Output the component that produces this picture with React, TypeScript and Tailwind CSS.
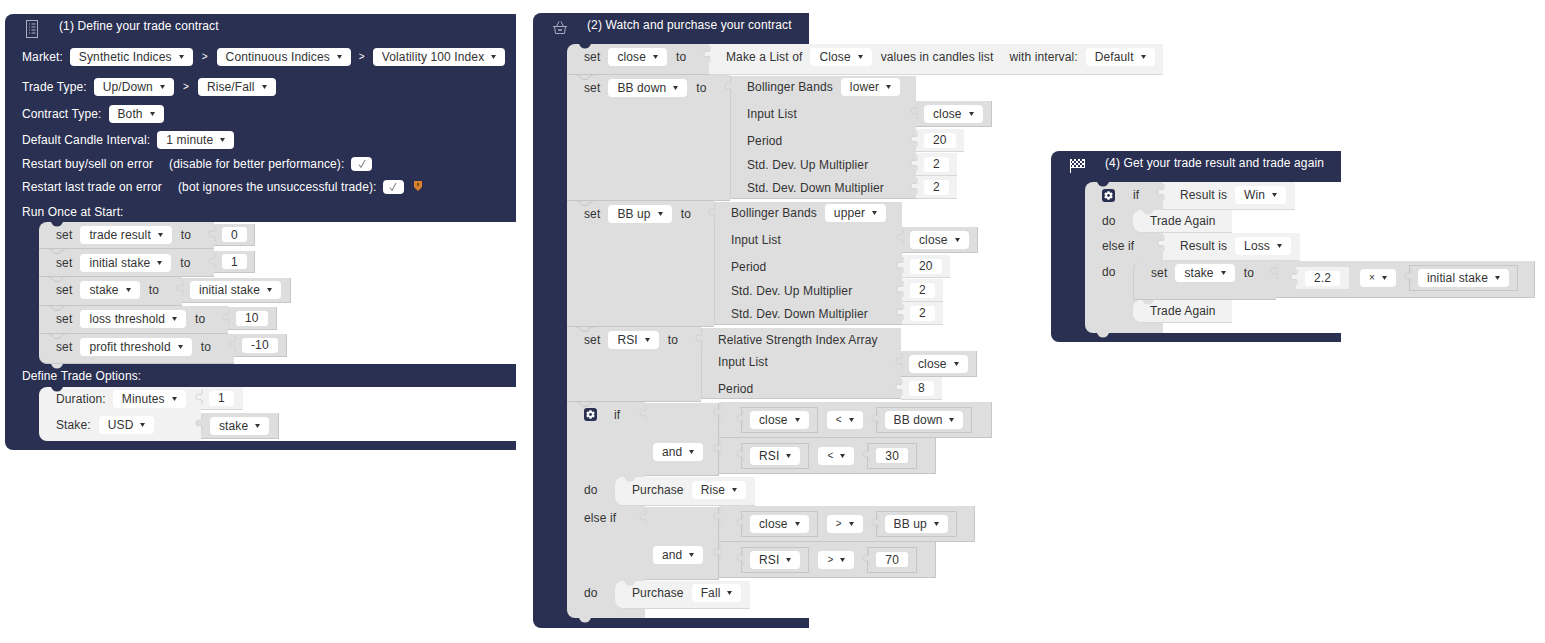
import type { ReactNode } from "react";
import clsx from "clsx";
import { FaCog } from "react-icons/fa";

const GRAY = "#dedede";
const NAVY = "#2a3052";

function Arrow() {
  return (
    <svg width="5" height="4" viewBox="0 0 5 4" className="ml-[7px] shrink-0">
      <path d="M0 0h5L2.5 4z" fill="#333" />
    </svg>
  );
}

function Pill({ children, className }: { children: ReactNode; className?: string }) {
  return (
    <span className={clsx("inline-flex h-[18px] shrink-0 items-center rounded-[4px] bg-white px-[9px] whitespace-nowrap text-[#333]", className)}>
      {children}
      <Arrow />
    </span>
  );
}

function Num({ children }: { children: ReactNode }) {
  return (
    <span className="inline-flex h-[15px] shrink-0 items-center rounded-[3px] bg-white px-[9px] text-[#333]">
      {children}
    </span>
  );
}

// the small bump a statement block has on its top edge
function Notch({ color, line, className }: { color?: string; line?: boolean; className?: string }) {
  return (
    <svg width="18" height="6" viewBox="0 0 18 6" className={clsx("pointer-events-none absolute", className)}>
      <path
        d="M0 0h3c1.500 3 3 4.500 6 4.500S13.500 3 15 0h3"
        fill={line ? "none" : color}
        stroke={line ? "#c6c6c6" : "none"}
      />
    </svg>
  );
}

// puzzle tab on the left edge of a value block
function Tab({ light }: { light?: boolean }) {
  return (
    <svg width="8" height="16" viewBox="0 0 8 16" className="pointer-events-none absolute top-[2px] left-[-6px]">
      <path d="M7 0v4C7 8 1 2 1 8s6 0 6 4v4" fill={light ? "#f2f2f2" : GRAY} stroke="#d2d2d2" strokeWidth="1" />
    </svg>
  );
}

function Value({ light, className, children }: { light?: boolean; className?: string; children: ReactNode }) {
  return (
    <div
      className={clsx(
        "relative flex shrink-0 items-center self-start whitespace-nowrap text-[#333]",
        light ? "bg-[#f2f2f2] shadow-[0_1px_0_#d8d8d8]" : "border-r border-b border-[#c6c6c6] bg-[#dedede]",
        className,
      )}
    >
      <Tab light={light} />
      {children}
    </div>
  );
}

// value block nested in a comparison, it has a thin outline all round
function Operand({ children }: { children: ReactNode }) {
  return (
    <div className="relative flex h-[26px] shrink-0 items-center border border-[#c6c6c6] pr-[8px] pl-[8px]">
      <Tab />
      {children}
    </div>
  );
}

function GearBadge() {
  return (
    <span className="flex h-[13px] w-[13px] shrink-0 items-center justify-center rounded-[3px] bg-[#2a3052]">
      <FaCog className="h-[9px] w-[9px] text-white" />
    </span>
  );
}

function DocIcon() {
  return (
    <svg width="12" height="18" viewBox="0 0 12 18" fill="none" stroke="#a9adc2">
      <rect x="0.500" y="0.500" width="11" height="17" />
      <path d="M3 4h1M5.500 4h4M3 7h1M5.500 7h4M3 10h1M5.500 10h4M3 13h1M5.500 13h4" strokeWidth="1" />
    </svg>
  );
}

function BasketIcon() {
  return (
    <svg width="14" height="13" viewBox="0 0 14 13" fill="none" stroke="#a9adc2">
      <path d="M0 5.500h14M1.500 5.500l1 7h9l1-7M3.500 5.500L6 0.500M10.500 5.500L8 0.500" />
      <path d="M5 9h4" strokeWidth="1.500" />
    </svg>
  );
}

function FlagIcon() {
  return (
    <svg width="15" height="15" viewBox="0 0 15 15">
      <rect x="0" y="1" width="15" height="9" fill="#fff" />
      <path d="M2 1h2v2H2zM6 1h2v2H6zM10 1h2v2h-2zM0 3h2v2H0zM4 3h2v2H4zM8 3h2v2H8zM12 3h2v2h-2zM2 5h2v2H2zM6 5h2v2H6zM10 5h2v2h-2zM0 7h2v2H0zM4 7h2v2H4zM8 7h2v2H8zM12 7h2v2h-2z" fill="#2a3052" />
      <path d="M0.500 1v14" stroke="#fff" />
    </svg>
  );
}

function Check() {
  return (
    <span className="flex h-[14px] w-[21px] items-center justify-center rounded-[4px] bg-white">
      <svg width="10" height="10" viewBox="0 0 10 10" fill="none">
        <path d="M2 5.500l2 3L8 1" stroke="#666" strokeWidth="0.900" />
      </svg>
    </span>
  );
}

function Shield() {
  return (
    <svg width="10" height="10" viewBox="0 0 10 10" className="ml-[9px] mb-[3px]">
      <path d="M1 0h8v6L5 10 1 6z" fill="#d9822b" />
      <path d="M5 2v3" stroke="#5a3a1a" strokeWidth="1.500" />
    </svg>
  );
}

function Rail({ children, className }: { children: ReactNode; className?: string }) {
  return (
    <div className={clsx("flex", className)}>
      <div className="w-[44px] shrink-0 bg-[#2a3052]" />
      <div className="relative -ml-[10px] min-w-0">{children}</div>
    </div>
  );
}

function SetCell({ name, className, children }: { name: string; className?: string; children?: ReactNode }) {
  return (
    <div className={clsx("relative flex shrink-0 border-b border-[#c6c6c6] bg-[#dedede] pl-[17px] text-[#333]", className)}>
      {children}
      <div className="flex h-[18px] items-center">
        <span>set</span>
        <Pill className="ml-[8px]">{name}</Pill>
        <span className="ml-[9px]">to</span>
      </div>
    </div>
  );
}

function DefineBlock() {
  return (
    <div className="absolute top-[14px] left-[5px] w-[511px]">
      <div className="rounded-tl-[8px] bg-[#2a3052] pl-[17px] text-white">
        <div className="flex h-[24px] items-center">
          <span className="ml-[4px] flex w-[33px] pt-[5px]">
            <DocIcon />
          </span>
          <span>(1) Define your trade contract</span>
        </div>
        <div className="flex h-[38px] items-center">
          Market:
          <Pill className="ml-[7px]">Synthetic Indices</Pill>
          <span className="mx-[9px] text-[10px]">&gt;</span>
          <Pill>Continuous Indices</Pill>
          <span className="mx-[8px] text-[10px]">&gt;</span>
          <Pill>Volatility 100 Index</Pill>
        </div>
        <div className="flex h-[22px] items-center">
          Trade Type:
          <Pill className="ml-[7px]">Up/Down</Pill>
          <span className="mx-[9px] text-[10px]">&gt;</span>
          <Pill>Rise/Fall</Pill>
        </div>
        <div className="flex h-[32px] items-center">
          Contract Type:
          <Pill className="ml-[7px]">Both</Pill>
        </div>
        <div className="flex h-[20px] items-center">
          Default Candle Interval:
          <Pill className="ml-[7px]">1 minute</Pill>
        </div>
        <div className="flex h-[28px] items-center">
          <span>Restart buy/sell on error</span>
          <span className="ml-[16px]">(disable for better performance):</span>
          <span className="ml-[7px]">
            <Check />
          </span>
        </div>
        <div className="flex h-[18px] items-center">
          <span>Restart last trade on error</span>
          <span className="ml-[16px]">(bot ignores the unsuccessful trade):</span>
          <span className="ml-[6px]">
            <Check />
          </span>
          <Shield />
        </div>
        <div className="flex h-[26px] items-center pt-[6px]">Run Once at Start:</div>
      </div>

      <Rail>
        <div className="flex h-[27px]">
          <SetCell name="trade result" className="h-[27px] w-[175px] items-center rounded-tl-[8px]">
            <Notch color={NAVY} className="top-0 left-[9px]" />
          </SetCell>
          <Value className="mt-[2px] h-[22px] pl-[8px]">
            <Num>0</Num>
            <span className="w-[7px]" />
          </Value>
        </div>
        <div className="flex h-[28px]">
          <SetCell name="initial stake" className="h-[28px] w-[175px] items-center">
            <Notch line className="top-0 left-[9px]" />
          </SetCell>
          <Value className="mt-[2px] h-[22px] pl-[8px]">
            <Num>1</Num>
            <span className="w-[7px]" />
          </Value>
        </div>
        <div className="flex h-[29px]">
          <SetCell name="stake" className="h-[29px] w-[143px] items-center pb-[2px]">
            <Notch line className="top-0 left-[9px]" />
          </SetCell>
          <Value className="mt-[1px] h-[25px] pr-[1px] pl-[8px]">
            <Pill>initial stake</Pill>
            <span className="w-[8px]" />
          </Value>
        </div>
        <div className="flex h-[28px]">
          <SetCell name="loss threshold" className="h-[28px] w-[189px] items-center pb-[2px]">
            <Notch line className="top-0 left-[9px]" />
          </SetCell>
          <Value className="mt-[1px] h-[23px] pl-[8px]">
            <Num>10</Num>
            <span className="w-[8px]" />
          </Value>
        </div>
        <div className="flex h-[30px]">
          <SetCell name="profit threshold" className="h-[30px] w-[195px] items-center rounded-bl-[8px] pb-[3px]">
            <Notch line className="top-0 left-[9px]" />
          </SetCell>
          <Value className="h-[23px] pl-[8px]">
            <Num>-10</Num>
            <span className="w-[8px]" />
          </Value>
        </div>
      </Rail>

      <div className="relative flex h-[23px] items-center bg-[#2a3052] pl-[17px] text-white">
        <Notch color={GRAY} className="top-0 left-[43px]" />
        Define Trade Options:
      </div>

      <Rail>
        <div className="flex h-[54px] text-[#333]">
          <div className="relative flex w-[162px] shrink-0 flex-col rounded-l-[8px] bg-[#f2f2f2] pl-[17px]">
            <Notch color={NAVY} className="top-0 left-[9px]" />
            <div className="flex h-[24px] items-center">
              Duration:
              <Pill className="ml-[7px]">Minutes</Pill>
            </div>
            <div className="flex h-[28px] items-center">
              Stake:
              <Pill className="ml-[8px]">USD</Pill>
            </div>
          </div>
          <div className="flex flex-col">
            <Value light className="h-[22px] pl-[8px]">
              <Num>1</Num>
              <span className="w-[9px]" />
            </Value>
            <Value className="mt-[4px] h-[26px] pl-[9px]">
              <Pill>stake</Pill>
              <span className="w-[9px]" />
            </Value>
          </div>
        </div>
      </Rail>
      <div className="h-[9px] rounded-bl-[8px] bg-[#2a3052]" />
    </div>
  );
}

function ListRow({ label, cell, value, className }: { label: ReactNode; cell: string; value?: ReactNode; className?: string }) {
  return (
    <div className={clsx("flex", className)}>
      <div className={clsx("flex shrink-0 items-center border-l border-[#cfcfcf] bg-[#dedede] pl-[16px] whitespace-nowrap", cell)}>{label}</div>
      {value}
    </div>
  );
}

function ListInput() {
  return (
    <Value className="h-[26px] pl-[8px]">
      <Pill>close</Pill>
      <span className="w-[8px]" />
    </Value>
  );
}

function PeriodValue({ n, className }: { n: string; className?: string }) {
  return (
    <Value light className={clsx("h-[22px] pl-[8px]", className)}>
      <Num>{n}</Num>
      <span className="w-[8px]" />
    </Value>
  );
}

function Bands({ band, cell }: { band: string; cell: string }) {
  return (
    <div className="relative mt-[1px] flex flex-col border-b border-transparent">
      <div className="relative h-0">
        <Tab />
      </div>
      <ListRow
        className="h-[25px]"
        cell={clsx(cell, "pb-[3px]")}
        label={
          <>
            Bollinger Bands
            <Pill className="ml-[8px]">{band}</Pill>
          </>
        }
      />
      <ListRow className="h-[28px]" cell={clsx(cell, "pb-[2px]")} label="Input List" value={<ListInput />} />
      <ListRow className="h-[23px]" cell={cell} label="Period" value={<PeriodValue n="20" />} />
      <ListRow className="h-[24px]" cell={clsx(cell, "pt-[2px]")} label="Std. Dev. Up Multiplier" value={<PeriodValue n="2" className="mt-[1px]" />} />
      <ListRow className="h-[23px]" cell={clsx(cell, "border-b border-b-[#c6c6c6] pt-[2px]")} label="Std. Dev. Down Multiplier" value={<PeriodValue n="2" />} />
    </div>
  );
}

function IfLabel({ children }: { children: ReactNode }) {
  return <div className="flex h-[24px] items-center">{children}</div>;
}

function Op({ children }: { children: ReactNode }) {
  return <span className="text-[10px]">{children}</span>;
}

function Compare({ left, op, right, end }: { left: string; op: string; right: ReactNode; end?: string }) {
  return (
    <Value className={clsx("h-[36px] pl-[22px] text-[#333]", end)}>
      <Operand>
        <Pill>{left}</Pill>
      </Operand>
      <Pill className="ml-[9px]">
        <Op>{op}</Op>
      </Pill>
      <div className="ml-[13px]">{right}</div>
    </Value>
  );
}

function Purchase({ kind, className }: { kind: string; className?: string }) {
  return (
    <div className={clsx("relative flex shrink-0 items-center rounded-l-[8px] bg-[#f2f2f2] pr-[9px] pl-[17px] shadow-[0_1px_0_#d8d8d8]", className)}>
      <Notch color={GRAY} className="top-0 left-[6px]" />
      Purchase
      <Pill className="ml-[8px]">{kind}</Pill>
    </div>
  );
}

function WatchBlock() {
  return (
    <div className="absolute top-[13px] left-[533px] w-[276px]">
      <div className="flex h-[31px] items-start rounded-tl-[8px] bg-[#2a3052] pt-[6px] text-white">
        <span className="ml-[20px] flex w-[34px] pt-[2px]">
          <BasketIcon />
        </span>
        <span>(2) Watch and purchase your contract</span>
      </div>

      <Rail>
        <div className="relative text-[#333]">
          <div className="flex h-[31px]">
            <SetCell name="close" className="w-[142px] items-center rounded-tl-[8px] pb-[4px]">
              <Notch color={NAVY} className="top-0 left-[9px]" />
            </SetCell>
            <Value light className="h-[30px] w-[454px] pb-[4px] pl-[17px]">
              Make a List of
              <Pill className="ml-[8px]">Close</Pill>
              <span className="ml-[9px]">values in candles list</span>
              <span className="ml-[16px]">with interval:</span>
              <Pill className="ml-[8px]">Default</Pill>
            </Value>
          </div>

          <div className="flex h-[126px]">
            <SetCell name="BB down" className="w-[163px] items-start pt-[4px]">
              <Notch line className="top-0 left-[9px]" />
            </SetCell>
            <Bands band="lower" cell="w-[186px]" />
          </div>

          <div className="flex h-[126px]">
            <SetCell name="BB up" className="w-[147px] items-start pt-[4px]">
              <Notch line className="top-0 left-[9px]" />
            </SetCell>
            <Bands band="upper" cell="w-[188px]" />
          </div>

          <div className="flex h-[75px]">
            <SetCell name="RSI" className="w-[134px] items-start pt-[4px]">
              <Notch line className="top-0 left-[9px]" />
            </SetCell>
            <div className="relative mt-[1px] flex flex-col">
              <div className="relative h-0">
                <Tab />
              </div>
              <ListRow className="h-[23px]" cell="w-[200px]" label="Relative Strength Index Array" />
              <ListRow className="h-[25px]" cell="w-[200px] pb-[3px]" label="Input List" value={<ListInput />} />
              <ListRow className="h-[23px]" cell="w-[200px] border-b border-b-[#c6c6c6] pt-[3px]" label="Period" value={<PeriodValue n="8" className="mt-[1px]" />} />
            </div>
          </div>

          <div className="flex h-[74px]">
            <div className="relative h-full w-[78px] shrink-0 bg-[#dedede] pl-[17px]">
              <Notch line className="top-0 left-[9px]" />
              <div className="flex h-[24px] items-center pt-[1px]">
                <GearBadge />
                <span className="ml-[17px]">if</span>
              </div>
            </div>
            <Value className="mt-[1px] h-[73px] w-[74px] items-end pb-[14px] pl-[8px]">
              <Pill>and</Pill>
            </Value>
            <div className="flex flex-col">
              <Compare
                left="close"
                op="<"
                end="pr-[19px]"
                right={
                  <Operand>
                    <Pill>BB down</Pill>
                  </Operand>
                }
              />
              <Compare
                left="RSI"
                op="<"
                end="pr-[18px]"
                right={
                  <Operand>
                    <Num>30</Num>
                  </Operand>
                }
              />
            </div>
          </div>

          <div className="flex h-[30px] w-[78px] bg-[#dedede] pl-[17px]">
            <span className="w-[31px] shrink-0 pt-[8px]">do</span>
            <Purchase kind="Rise" className="mt-[1px] h-[28px] pb-[2px]" />
          </div>

          <div className="flex h-[75px]">
            <div className="h-full w-[78px] shrink-0 bg-[#dedede] pl-[17px]">
              <IfLabel>else if</IfLabel>
            </div>
            <Value className="mt-[1px] h-[73px] w-[74px] items-end pb-[15px] pl-[8px]">
              <Pill>and</Pill>
            </Value>
            <div className="flex flex-col">
              <Compare
                left="close"
                op=">"
                end="pr-[17px]"
                right={
                  <Operand>
                    <Pill>BB up</Pill>
                  </Operand>
                }
              />
              <Compare
                left="RSI"
                op=">"
                end="pr-[18px]"
                right={
                  <Operand>
                    <Num>70</Num>
                  </Operand>
                }
              />
            </div>
          </div>

          <div className="flex h-[27px] w-[78px] bg-[#dedede] pl-[17px]">
            <span className="w-[31px] shrink-0 pt-[6px]">do</span>
            <Purchase kind="Fall" className="h-[27px] pb-[3px]" />
          </div>
          <div className="h-[10px] w-[78px] rounded-bl-[8px] bg-[#dedede]" />
        </div>
      </Rail>
      <div className="relative h-[10px] rounded-bl-[8px] bg-[#2a3052]">
        <Notch color={GRAY} className="top-0 left-[43px]" />
      </div>
    </div>
  );
}

function TradeAgain({ className }: { className?: string }) {
  return (
    <div className={clsx("relative flex w-[99px] shrink-0 items-center rounded-l-[8px] bg-[#f2f2f2] pl-[17px] shadow-[0_1px_0_#d8d8d8]", className)}>
      <Notch color={GRAY} className="top-0 left-[6px]" />
      Trade Again
    </div>
  );
}

function ResultBlock() {
  return (
    <div className="absolute top-[151px] left-[1051px] w-[290px]">
      <div className="flex h-[31px] items-start rounded-tl-[8px] bg-[#2a3052] pt-[6px] text-white">
        <span className="ml-[19px] flex w-[35px] pt-[1px]">
          <FlagIcon />
        </span>
        <span>(4) Get your trade result and trade again</span>
      </div>

      <Rail>
        <div className="relative w-[78px] text-[#333]">
          <div className="relative flex h-[27px] rounded-tl-[8px] bg-[#dedede] pl-[17px]">
            <Notch color={NAVY} className="top-0 left-[9px]" />
            <span className="flex w-[31px] shrink-0 items-center pb-[1px]">
              <GearBadge />
            </span>
            <span className="flex w-[30px] shrink-0 items-center pb-[2px]">if</span>
            <Value light className="h-[27px] pr-[9px] pb-[2px] pl-[17px]">
              Result is
              <Pill className="ml-[8px]">Win</Pill>
            </Value>
          </div>
          <div className="flex h-[24px] bg-[#dedede] pl-[17px]">
            <span className="w-[31px] shrink-0 pt-[6px]">do</span>
            <TradeAgain className="mt-[1px] h-[22px]" />
          </div>
          <div className="flex h-[28px] bg-[#dedede] pl-[17px]">
            <span className="flex w-[61px] shrink-0 items-center pb-[2px]">else if</span>
            <Value light className="h-[27px] pr-[9px] pb-[2px] pl-[17px]">
              Result is
              <Pill className="ml-[8px]">Loss</Pill>
            </Value>
          </div>
          <div className="flex h-[39px] bg-[#dedede] pl-[17px]">
            <span className="w-[31px] shrink-0 pt-[5px]">do</span>
            <SetCell name="stake" className="h-[39px] w-[143px] items-start rounded-tl-[8px] border-l border-l-[#cfcfcf] pt-[3px]" />
            <Value className="h-[37px] pr-[16px] pb-[2px] pl-[20px]">
              <div className="relative flex h-[22px] items-center bg-[#f2f2f2] pr-[9px] pl-[9px]">
                <Tab light />
                <Num>2.2</Num>
              </div>
              <Pill className="ml-[11px]">
                <Op>×</Op>
              </Pill>
              <div className="ml-[13px]">
                <Operand>
                  <Pill>initial stake</Pill>
                </Operand>
              </div>
            </Value>
          </div>
          <div className="flex h-[23px] bg-[#dedede] pl-[17px]">
            <span className="w-[31px] shrink-0" />
            <TradeAgain className="h-[22px]" />
          </div>
          <div className="h-[10px] rounded-bl-[8px] bg-[#dedede]" />
        </div>
      </Rail>
      <div className="relative h-[9px] rounded-bl-[8px] bg-[#2a3052]">
        <Notch color={GRAY} className="top-0 left-[43px]" />
      </div>
    </div>
  );
}

export default function App() {
  return (
    <div className="relative h-[643px] w-full overflow-hidden bg-white font-['Liberation_Sans',Arial,sans-serif] text-[12px] leading-none tracking-[0.12px]">
      <DefineBlock />
      <WatchBlock />
      <ResultBlock />
    </div>
  );
}
